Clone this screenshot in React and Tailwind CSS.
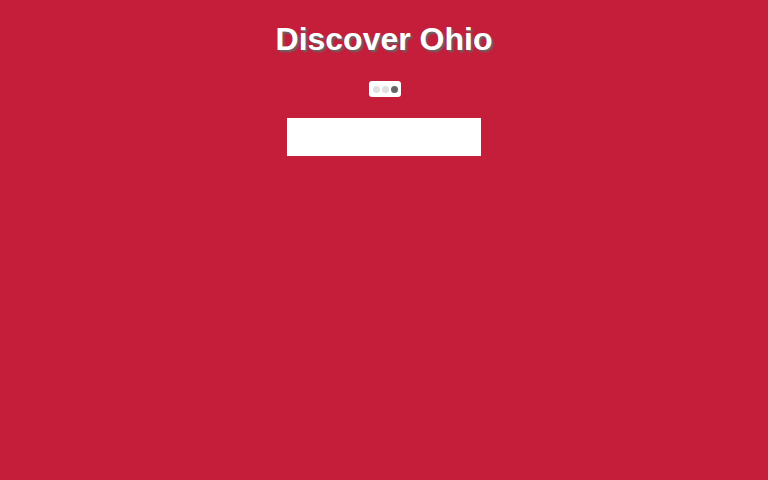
import React from 'react';

const App = () => {
  return (
    <div className="min-h-screen w-full bg-[#c41e3a] flex flex-col items-center font-['Liberation_Sans',Arial,sans-serif]">
      <h1 className="mt-[21px] text-[32px] leading-[37px] font-bold text-white [text-shadow:2px_2px_2px_#666]">
        Discover Ohio
      </h1>

      {/* slide indicator */}
      <div className="mt-[23px] ml-[2px] w-8 h-4 bg-white rounded-[3px] flex items-center justify-center gap-[2px]">
        <span className="w-[7px] h-[7px] rounded-full bg-[#e0e0e0]" />
        <span className="w-[7px] h-[7px] rounded-full bg-[#e0e0e0]" />
        <span className="w-[7px] h-[7px] rounded-full bg-[#666]" />
      </div>

      <div className="mt-[21px] w-[194px] h-[38px] bg-white" />
    </div>
  );
};

export default App;
